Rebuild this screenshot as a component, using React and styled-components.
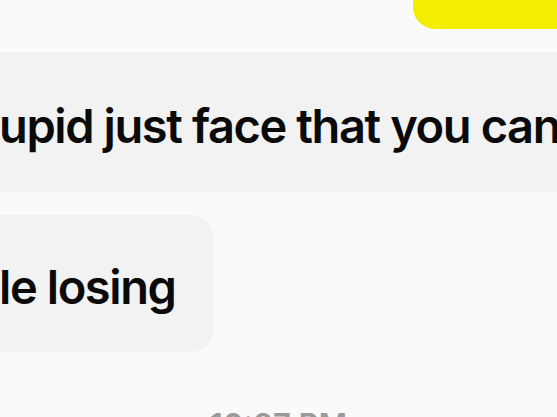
import React from 'react';
import styled, { createGlobalStyle } from 'styled-components';

const GlobalStyle = createGlobalStyle`
	html, body {
		margin: 0;
		padding: 0;
		background: #fafafa;
		overflow: hidden;
	}
	#root {
		height: 417px;
	}
`;

export default function App () {
	return (
		<>
			<GlobalStyle />
			<Thread>
				<OutgoingRow>
					<OutgoingBubble />
				</OutgoingRow>

				<IncomingBubble $wide>
					<MessageText>upid just face that you can</MessageText>
				</IncomingBubble>

				<IncomingBubble>
					<MessageText>le losing</MessageText>
				</IncomingBubble>

				<Timestamp>10:37 PM</Timestamp>
			</Thread>
		</>
	);
}

const Thread = styled.div`
	display: flex;
	flex-direction: column;
	height: 417px;
	overflow: hidden;
	font-family: Inter, "Noto Sans", sans-serif;
`;

const OutgoingRow = styled.div`
	display: flex;
	justify-content: flex-end;
`;

const OutgoingBubble = styled.div`
	width: 164px;
	height: 29px;
	margin-right: -20px;
	background: #f3ee00;
	border-bottom-left-radius: 22px;
`;

const IncomingBubble = styled.div`
	display: flex;
	align-items: center;
	box-sizing: border-box;
	flex-shrink: 0;
	margin-top: 23px;
	margin-left: -40px;
	padding-left: 39px;
	background: #f2f2f2;
	border-radius: 22px;
	white-space: nowrap;
	height: ${ p => p.$wide ? "140px" : "137px" };
	width: ${ p => p.$wide ? "680px" : "253px" };
`;

const MessageText = styled.span`
	font-size: 47px;
	font-weight: 600;
	letter-spacing: -1.4px;
	color: #0a0a0a;
	line-height: 1;
	padding-top: 6px;
`;

const Timestamp = styled.div`
	margin-top: 57px;
	align-self: center;
	font-size: 31px;
	font-weight: 600;
	color: #9a9a9a;
	line-height: 1;
	white-space: nowrap;
`;
